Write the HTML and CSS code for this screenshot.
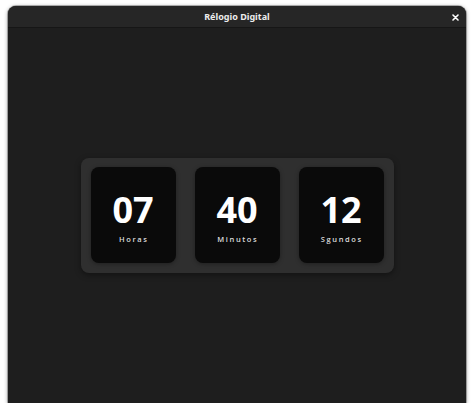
FILE: index.html
```html
<!DOCTYPE html>
<html lang="pt">
<head>
<meta charset="utf-8">
<title>Rélogio Digital</title>
<link rel="stylesheet" href="styles.css">
</head>
<body>
<div class="window">
  <header class="titlebar">
    <span class="title">Rélogio Digital</span>
    <button class="close" aria-label="Fechar">
      <svg width="7" height="7" viewBox="0 0 7 7"><path d="M1 1L6 6M6 1L1 6" stroke="#ffffff" stroke-width="1.6" stroke-linecap="round"/></svg>
    </button>
  </header>
  <main class="content">
    <div class="clock">
      <div class="card"><span class="num">07</span><span class="label">Horas</span></div>
      <div class="card"><span class="num">40</span><span class="label">Minutos</span></div>
      <div class="card"><span class="num">12</span><span class="label">Sgundos</span></div>
    </div>
  </main>
</div>
</body>
</html>
```
FILE: styles.css
```css
html, body {
  margin: 0;
  padding: 0;
  background: #ffffff;
}
body {
  padding: 6px 8px 0 8px;
  font-family: "Open Sans", "Noto Sans", sans-serif;
}
.window {
  width: 458px;
  height: 397px;
  display: flex;
  flex-direction: column;
  border-radius: 8px 8px 0 0;
  overflow: hidden;
  background: #1e1e1e;
  box-shadow: 0 1px 4px rgba(0,0,0,0.45), 0 0 0 1px rgba(0,0,0,0.25);
}
.titlebar {
  height: 21px;
  flex: none;
  display: flex;
  align-items: center;
  justify-content: center;
  position: relative;
  background: #262626;
  border-bottom: 1px solid #161616;
}
.title {
  color: #ececec;
  font-family: "Noto Sans", sans-serif;
  font-weight: 700;
  font-size: 9px;
}
.close {
  position: absolute;
  right: 7px;
  top: 7px;
  width: 8px;
  height: 8px;
  padding: 0;
  border: 0;
  background: none;
  display: flex;
  align-items: center;
  justify-content: center;
}
.content {
  flex: 1;
  display: flex;
  align-items: center;
  justify-content: center;
  background: #1e1e1e;
}
.clock {
  display: flex;
  gap: 19px;
  padding: 9px 10px 10px 10px;
  background: #2f2f2f;
  border-radius: 8px;
  box-shadow: 0 2px 6px rgba(0,0,0,0.4);
}
.card {
  width: 85px;
  height: 96px;
  background: #0a0a0a;
  border-radius: 8px;
  display: flex;
  flex-direction: column;
  align-items: center;
  justify-content: center;
  box-shadow: 0 1px 4px rgba(0,0,0,0.35);
}
.num {
  color: #ffffff;
  font-weight: 700;
  font-size: 36px;
  line-height: 40px;
  margin-top: 4px;
}
.label {
  color: #dcdcdc;
  font-weight: 600;
  font-size: 7.5px;
  letter-spacing: 1.6px;
  line-height: 10px;
  margin-top: 4px;
  margin-right: -1.6px;
}
```
